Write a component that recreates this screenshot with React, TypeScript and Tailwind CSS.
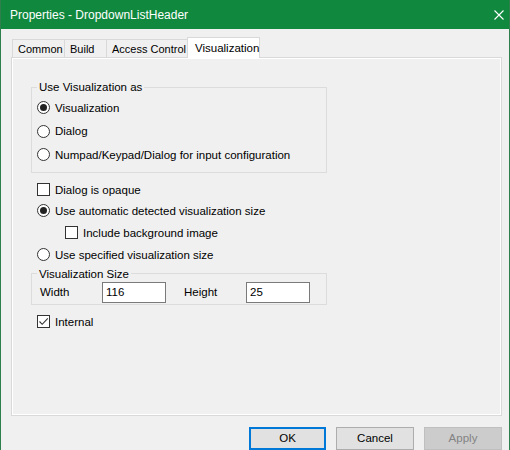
import React from 'react';

const FONT = '"Liberation Sans", Arial, sans-serif';

function Radio({ checked }: { checked?: boolean }) {
  return (
    <span className="w-[13px] h-[13px] shrink-0 rounded-full border border-[#333333] bg-white flex items-center justify-center">
      {checked && <span className="w-[7px] h-[7px] rounded-full bg-[#222222]" />}
    </span>
  );
}

function Check({ checked }: { checked?: boolean }) {
  return (
    <span className="w-[13px] h-[13px] shrink-0 border border-[#333333] bg-white flex items-center justify-center">
      {checked && (
        <svg width="11" height="11" viewBox="0 0 11 11" fill="none">
          <path d="M1.5 5.5 L4.2 8.3 L9.8 2.3" stroke="#333333" strokeWidth="1.1" />
        </svg>
      )}
    </span>
  );
}

function Row({ children, h = 'h-[22px]' }: { children: React.ReactNode; h?: string }) {
  return <div className={`flex items-center gap-[5px] whitespace-nowrap ${h}`}>{children}</div>;
}

const TABS = [
  { label: 'Common', w: 'w-[53px]' },
  { label: 'Build', w: 'w-[43px]' },
  { label: 'Access Control', w: 'w-[83px]' },
];

export default function App() {
  return (
    <div
      className="w-[510px] h-[450px] overflow-hidden bg-[#f0f0f0] border-x border-[#2f7f4c] text-[11.5px] leading-[16px] text-black"
      style={{ fontFamily: FONT }}
    >
      {/* title bar */}
      <div className="h-[29px] -mx-px bg-[#10893e] flex items-center justify-between pl-[10px] pr-[6px] text-white text-[12px]">
        <span>Properties - DropdownListHeader</span>
        <svg width="10" height="10" viewBox="0 0 10 10">
          <path d="M0.5 0.5 L9.5 9.5 M9.5 0.5 L0.5 9.5" stroke="#ffffff" strokeWidth="1.1" />
        </svg>
      </div>

      <div className="pl-[10px] pr-[7px]">
        {/* tabs */}
        <div className="mt-[8px] h-[20px] flex items-end pl-[1px] relative z-10 whitespace-nowrap">
          {TABS.map((t) => (
            <div
              key={t.label}
              className={`${t.w} h-[18px] pl-[5px] border border-b-0 border-[#d9d9d9] -ml-px first:ml-0 bg-[#f0f0f0] flex items-center text-[11px]`}
            >
              {t.label}
            </div>
          ))}
          <div className="w-[73px] h-[21px] -mb-px -ml-[2px] pl-[7px] border border-b-0 border-[#d9d9d9] bg-white flex items-start pt-[2px]">
            Visualization
          </div>
        </div>

        {/* panel */}
        <div className="w-[491px] h-[359px] border border-[#d9d9d9] shadow-[inset_1px_1px_0_#ffffff,inset_-1px_-1px_0_#ffffff]">
          <div className="ml-[19px] mt-[21px] w-[296px]">
            <fieldset className="border border-[#dcdcdc] pl-[5px] pt-[1px] pb-[5px]">
              <legend className="px-[2px]">Use Visualization as</legend>
              <Row h="h-[23.5px]">
                <Radio checked />
                <span>Visualization</span>
              </Row>
              <Row h="h-[23.5px]">
                <Radio />
                <span>Dialog</span>
              </Row>
              <Row h="h-[23.5px]">
                <Radio />
                <span>Numpad/Keypad/Dialog for input configuration</span>
              </Row>
            </fieldset>

            <div className="mt-[7px] pl-[6px]">
              <Row h="h-[20px]">
                <Check />
                <span>Dialog is opaque</span>
              </Row>
              <Row>
                <Radio checked />
                <span>Use automatic detected visualization size</span>
              </Row>
              <div className="pl-[28px]">
                <Row>
                  <Check />
                  <span>Include background image</span>
                </Row>
              </div>
              <Row>
                <Radio />
                <span>Use specified visualization size</span>
              </Row>
            </div>

            <fieldset className="border border-[#dcdcdc] pl-[5px] pb-[1px]">
              <legend className="px-[2px]">Visualization Size</legend>
              <div className="h-[21px] flex items-center pl-[3px]">
                <span className="w-[62px]">Width</span>
                <div className="w-[64px] h-[21px] border border-[#7a7a7a] bg-white pl-[3px] flex items-center">116</div>
                <span className="w-[62px] ml-[18px]">Height</span>
                <div className="w-[64px] h-[21px] border border-[#7a7a7a] bg-white pl-[3px] flex items-center">25</div>
              </div>
            </fieldset>

            <div className="mt-[6px] pl-[6px]">
              <Row>
                <Check checked />
                <span>Internal</span>
              </Row>
            </div>
          </div>
        </div>

        {/* buttons */}
        <div className="mt-[11px] flex justify-end gap-[10px]">
          <button className="w-[77px] h-[23px] border-2 border-[#0078d7] bg-[#e1e1e1] leading-none">OK</button>
          <button className="w-[78px] h-[23px] border border-[#adadad] bg-[#e1e1e1] leading-none">Cancel</button>
          <button className="w-[78px] h-[23px] border border-[#bfbfbf] bg-[#cccccc] text-[#838383] leading-none">Apply</button>
        </div>
      </div>
    </div>
  );
}
